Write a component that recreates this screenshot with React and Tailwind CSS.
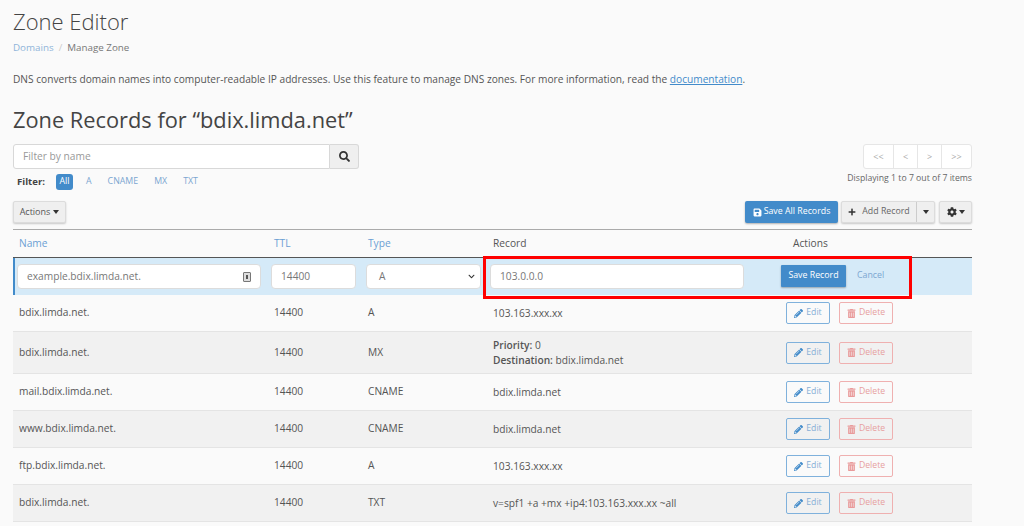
import React from 'react';
import { FaSearch, FaSave, FaPlus, FaCog, FaPencilAlt, FaTrashAlt, FaChevronDown } from 'react-icons/fa';

const records = [
  { name: 'bdix.limda.net.', type: 'A', record: '103.163.xxx.xx' },
  { name: 'bdix.limda.net.', type: 'MX', mx: true },
  { name: 'mail.bdix.limda.net.', type: 'CNAME', record: 'bdix.limda.net' },
  { name: 'www.bdix.limda.net.', type: 'CNAME', record: 'bdix.limda.net' },
  { name: 'ftp.bdix.limda.net.', type: 'A', record: '103.163.xxx.xx' },
  { name: 'bdix.limda.net.', type: 'TXT', record: 'v=spf1 +a +mx +ip4:103.163.xxx.xx ~all' },
];

const Caret = () => (
  <span className="inline-block w-0 h-0 border-x-[3.5px] border-x-transparent border-t-[4px] border-t-[#333]" />
);

const Field = ({ className, children }) => (
  <div className={`h-[25px] bg-white border border-[#dcdcdc] rounded-[4px] flex items-center text-[10.2px] text-[#777] ${className}`}>
    {children}
  </div>
);

const RecordRow = ({ item, index }) => (
  <div className={`flex items-center text-[10.2px] text-[#555] border-b border-[#e4e4e4] ${item.mx ? 'h-[42px]' : 'h-[37px]'} ${index % 2 === 1 ? 'bg-[#f1f1f1]' : ''}`}>
    <div className="w-[261px] pl-[6px]">{item.name}</div>
    <div className="w-[94px]">14400</div>
    <div className="w-[125px]">{item.type}</div>
    <div className="w-[293px] leading-[14.5px]">
      {item.mx ? (
        <>
          <div><b className="font-semibold">Priority:</b> 0</div>
          <div><b className="font-semibold">Destination:</b> bdix.limda.net</div>
        </>
      ) : item.record}
    </div>
    <div className="flex gap-[9px]">
      <button className="w-[44px] h-[22px] border border-[#7fb1dc] rounded-[2px] flex items-center justify-center gap-[3px] text-[8.7px] text-[#85aed6]">
        <FaPencilAlt size={9} className="text-[#428bca]" />Edit
      </button>
      <button className="w-[54px] h-[22px] border border-[#efb0b0] rounded-[2px] flex items-center justify-center gap-[3px] text-[8.7px] text-[#e79f9f]">
        <FaTrashAlt size={9} className="text-[#e99a9a]" />Delete
      </button>
    </div>
  </div>
);

export default function App() {
  return (
    <div className="h-[526px] overflow-hidden bg-[#fafafa] pl-[13px] pr-[52px] font-['Open_Sans',sans-serif] text-[#444]">
      <h1 className="pt-[8px] text-[22px] leading-[27px] font-light text-[#444]">Zone Editor</h1>
      <div className="mt-[5px] text-[9.8px] leading-[16px] text-[#777]">
        <span className="text-[#8fb4d9]">Domains</span>
        <span className="text-[#ccc] mx-[5px]">/</span>
        Manage Zone
      </div>
      <p className="mt-[15px] text-[10.17px] leading-[16px] whitespace-nowrap text-[#555]">
        DNS converts domain names into computer-readable IP addresses. Use this feature to manage DNS zones. For more information, read the{' '}
        <span className="text-[#428bca] underline">documentation</span>.
      </p>
      <h2 className="mt-[19px] text-[21.8px] leading-[28px] text-[#444]">Zone Records for “bdix.limda.net”</h2>

      <div className="mt-[10px] flex justify-between items-start h-[58px]">
        <div>
          <div className="w-[346px] h-[25px] flex">
            <div className="flex-1 bg-white border border-[#d8d8d8] rounded-l-[3px] pl-[9px] flex items-center text-[10.2px] text-[#999]">Filter by name</div>
            <div className="w-[29px] bg-[#efefef] border border-l-0 border-[#d8d8d8] rounded-r-[3px] flex items-center justify-center">
              <FaSearch size={11} className="text-[#333]" />
            </div>
          </div>
          <div className="mt-[5px] flex items-center text-[8.8px] text-[#7ba6d1]">
            <b className="ml-[4px] text-[9.6px] font-bold text-[#444]">Filter:</b>
            <span className="ml-[11px] w-[17px] h-[16px] bg-[#428bca] text-white rounded-[3px] flex items-center justify-center">All</span>
            <span className="ml-[13px]">A</span>
            <span className="ml-[16px]">CNAME</span>
            <span className="ml-[16px]">MX</span>
            <span className="ml-[16px]">TXT</span>
          </div>
        </div>
        <div className="flex flex-col items-end">
          <div className="flex h-[25px] bg-white border border-[#e6e6e6] rounded-[3px] text-[9px] text-[#aaa]">
            <span className="w-[30px] flex items-center justify-center border-r border-[#e6e6e6]">&lt;&lt;</span>
            <span className="w-[24px] flex items-center justify-center border-r border-[#e6e6e6]">&lt;</span>
            <span className="w-[24px] flex items-center justify-center border-r border-[#e6e6e6]">&gt;</span>
            <span className="w-[29px] flex items-center justify-center">&gt;&gt;</span>
          </div>
          <div className="mt-[2px] text-[8.7px] leading-[14px] text-[#666]">Displaying 1 to 7 out of 7 items</div>
        </div>
      </div>

      <div className="flex justify-between items-center h-[22px] -mt-[1px]">
        <button className="w-[53px] h-[22px] bg-[#efefef] border border-[#dcdcdc] rounded-[2px] shadow-[0_1px_2px_rgba(0,0,0,0.2)] flex items-center justify-center gap-[3px] text-[9px] text-[#555]">
          Actions <Caret />
        </button>
        <div className="flex items-center gap-[3px]">
          <button className="w-[93px] h-[22px] bg-[#428bca] rounded-[2px] shadow-[0_1px_2px_rgba(0,0,0,0.3)] flex items-center justify-center gap-[2px] text-[8.8px] text-white">
            <FaSave size={9} />Save All Records
          </button>
          <div className="h-[22px] flex bg-[#efefef] border border-[#dcdcdc] rounded-[2px] shadow-[0_1px_2px_rgba(0,0,0,0.2)] text-[8.8px] text-[#666]">
            <span className="w-[75px] flex items-center justify-center gap-[6px] border-r border-[#ccc]"><FaPlus size={8} className="text-[#333]" />Add Record</span>
            <span className="w-[17px] flex items-center justify-center"><Caret /></span>
          </div>
          <button className="ml-[1px] w-[33px] h-[22px] bg-[#efefef] border border-[#dcdcdc] rounded-[2px] shadow-[0_1px_2px_rgba(0,0,0,0.2)] flex items-center justify-center gap-[2px]">
            <FaCog size={10} className="text-[#333]" /><Caret />
          </button>
        </div>
      </div>

      <div className="relative mt-[6px]">
        <div className="h-[29px] pt-[1px] flex items-center text-[10.2px] border-t border-[#aaa] border-b border-b-[#555]">
          <div className="w-[261px] pl-[6px] text-[#6b9fd4]">Name</div>
          <div className="w-[94px] text-[#6b9fd4]">TTL</div>
          <div className="w-[125px] text-[#6b9fd4]">Type</div>
          <div className="w-[300px] text-[#555]">Record</div>
          <div className="text-[#555]">Actions</div>
        </div>

        <div className="h-[37px] bg-[#d5eaf8] border-l-2 border-l-[#428bca] flex items-center">
          <Field className="ml-[2px] w-[244px] pl-[9px] pr-[9px] justify-between">
            example.bdix.limda.net.
            <span className="w-[8px] h-[10px] border border-[#777] bg-[#ddd] rounded-[1px] flex items-center justify-center">
              <span className="w-[2px] h-[4px] bg-[#555]" />
            </span>
          </Field>
          <Field className="ml-[10px] w-[85px] pl-[9px]">14400</Field>
          <Field className="ml-[10px] w-[115px] pl-[12px] pr-[5px] justify-between">
            A
            <FaChevronDown size={7} className="text-[#333]" />
          </Field>
          <Field className="ml-[9px] w-[254px] pl-[9px]">103.0.0.0</Field>
          <button className="ml-[37px] -mt-[2px] w-[65px] h-[22px] bg-[#428bca] rounded-[1px] shadow-[0_1px_2px_rgba(0,0,0,0.3)] text-[8.8px] text-white">Save Record</button>
          <span className="ml-[11px] -mt-[2px] text-[8.8px] text-[#7ba6d1]">Cancel</span>
        </div>

        {records.map((item, i) => <RecordRow key={i} item={item} index={i} />)}

        {/* red highlight drawn over the screenshot */}
        <div className="absolute left-[470px] top-[27px] w-[429px] h-[43px] border-[3px] border-[#f00]" />
      </div>
    </div>
  );
}
